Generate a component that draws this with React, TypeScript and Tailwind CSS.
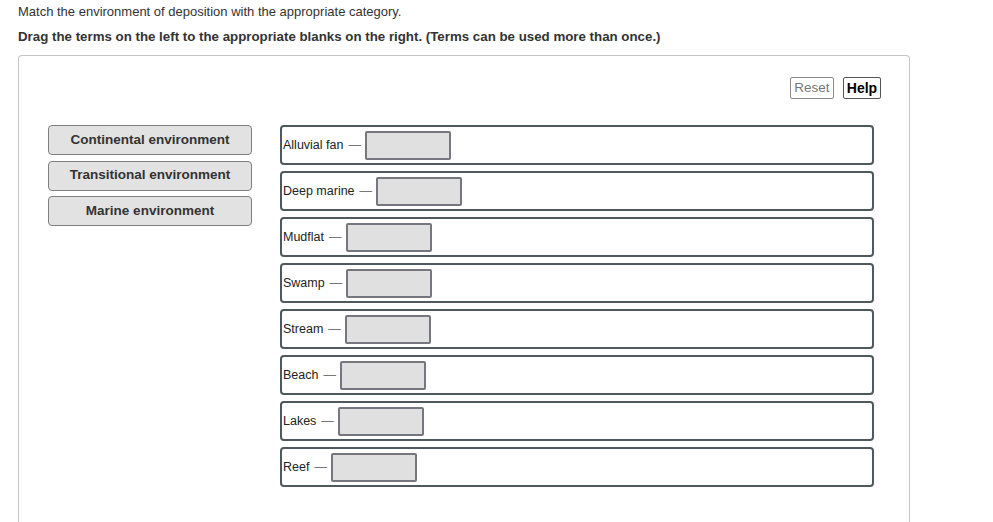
import React from "react";

const categories = [
  "Continental environment",
  "Transitional environment",
  "Marine environment",
];

const terms = [
  "Alluvial fan",
  "Deep marine",
  "Mudflat",
  "Swamp",
  "Stream",
  "Beach",
  "Lakes",
  "Reef",
];

export default function App() {
  return (
    <div className="min-h-screen bg-white font-['Liberation_Sans',Arial,sans-serif] text-[#333]">
      <div className="pl-[18px] pt-[4px]">
        <p className="whitespace-nowrap text-[13px] leading-[16px] text-[#333]">
          Match the environment of deposition with the appropriate category.
        </p>
        <p className="mt-[8px] whitespace-nowrap text-[13.3px] font-bold leading-[18px] text-[#333]">
          Drag the terms on the left to the appropriate blanks on the right.
          (Terms can be used more than once.)
        </p>
      </div>

      <div className="ml-[18px] mt-[9px] h-[500px] w-[892px] rounded-t-[4px] border border-b-0 border-[#c4c4c4]">
        <div className="flex justify-end gap-[9px] pr-[28px] pt-[21px]">
          <button className="h-[22px] w-[44px] rounded-[2px] border border-[#8a8a8a] text-[13.5px] leading-none text-[#777]">
            Reset
          </button>
          <button className="h-[22px] w-[38px] rounded-[2px] border border-[#555] text-[14px] font-bold leading-none text-black">
            Help
          </button>
        </div>

        <div className="mt-[26px] flex pl-[29px]">
          <div className="flex w-[204px] flex-col gap-[5.5px]">
            {categories.map((c) => (
              <div
                key={c}
                className="flex h-[30px] items-center justify-center rounded-[4px] border-[1.5px] border-[#7f7f7f] bg-[#e2e2e2] text-[13.5px] font-bold text-[#333]"
              >
                {c}
              </div>
            ))}
          </div>

          <div className="ml-[28px] flex w-[594px] flex-col gap-[6px]">
            {terms.map((t) => (
              <div
                key={t}
                className="flex h-[40px] items-center rounded-[4px] border-2 border-[#4e585d] pl-[1px] text-[12.5px] text-[#222]"
              >
                <span>{t}</span>
                <span className="ml-[5px] text-[#777]">—</span>
                <span className="ml-[4px] h-[29px] w-[86px] rounded-[2px] border-2 border-[#76767f] bg-[#e0e0e0]" />
              </div>
            ))}
          </div>
        </div>
      </div>
    </div>
  );
}
